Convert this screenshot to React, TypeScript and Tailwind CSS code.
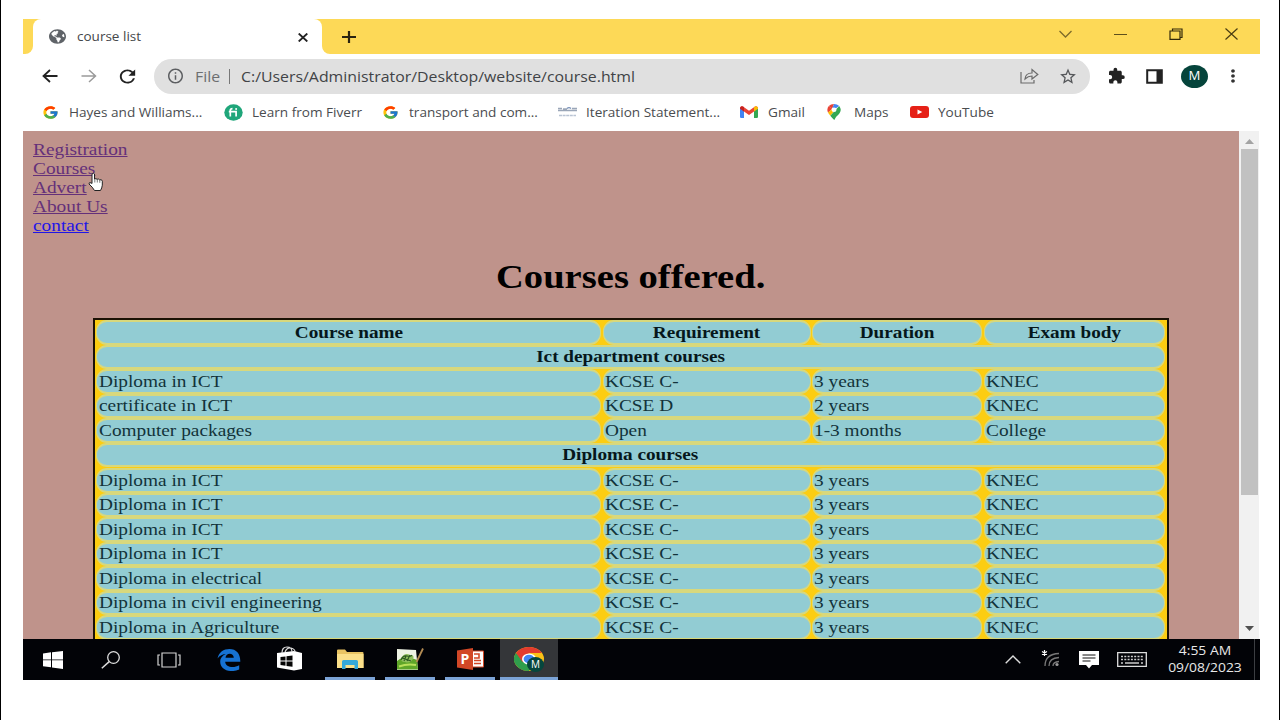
import type { ReactNode } from 'react';
import { FaGlobeAmericas } from 'react-icons/fa';
import { FcGoogle } from 'react-icons/fc';
import { MdExtension, MdInfoOutline, MdMoreVert, MdRefresh, MdStarBorder } from 'react-icons/md';

const LINKS = ['Registration', 'Courses', 'Advert', 'About Us', 'contact'];

// A single string is a section heading that spans every column
const ROWS: (string | string[])[] = [
  'Ict department courses',
  ['Diploma in ICT', 'KCSE C-', '3 years', 'KNEC'],
  ['certificate in ICT', 'KCSE D', '2 years', 'KNEC'],
  ['Computer packages', 'Open', '1-3 months', 'College'],
  'Diploma courses',
  ['Diploma in ICT', 'KCSE C-', '3 years', 'KNEC'],
  ['Diploma in ICT', 'KCSE C-', '3 years', 'KNEC'],
  ['Diploma in ICT', 'KCSE C-', '3 years', 'KNEC'],
  ['Diploma in ICT', 'KCSE C-', '3 years', 'KNEC'],
  ['Diploma in electrical', 'KCSE C-', '3 years', 'KNEC'],
  ['Diploma in civil engineering', 'KCSE C-', '3 years', 'KNEC'],
  ['Diploma in Agriculture', 'KCSE C-', '3 years', 'KNEC'],
];

const CELL = 'h-[24.5px] flex items-center rounded-[11px] border-x border-y-2 border-[#d8d87c] bg-[#92ccd3] whitespace-nowrap';

function FiverrIcon() {
  return (
    <svg width="19" height="17" viewBox="0 0 19 17">
      <ellipse cx="9.5" cy="8.5" rx="9.2" ry="8.2" fill="#1fa67a" />
      <path d="M6.3 12.5V6.6q0-2 2.2-2M4.8 7.6h7.3v4.9" fill="none" stroke="#fff" strokeWidth="1.7" />
      <circle cx="12.1" cy="4.9" r="1" fill="#fff" />
    </svg>
  );
}

function IterationIcon() {
  return (
    <svg width="21" height="12" viewBox="0 0 21 12">
      <path d="M1 2.5h4M6 3h4M15 2.5h5M1 4.5h19" stroke="#9aa6b8" strokeWidth="1.3" />
      <path d="M10 2.5q2-1.8 4 0" fill="none" stroke="#7890b8" strokeWidth="1.3" />
      <path d="M2 9.5h17" stroke="#b9c4d4" strokeWidth="1.6" strokeDasharray="3 .6" />
    </svg>
  );
}

function GmailIcon() {
  return (
    <svg width="18" height="12" viewBox="0 0 18 13" preserveAspectRatio="none">
      <path d="M0 2v9.8q0 1.2 1.2 1.2H4V5z" fill="#4285f4" />
      <path d="M18 2v9.8q0 1.2-1.2 1.2H14V5z" fill="#34a853" />
      <path d="M0 1.8Q.8-.6 3 .5l6 4.6 6-4.6q2.2-1.1 3 1.3L14 6 9 9.7 4 6z" fill="#ea4335" />
      <path d="M14 1.3l1-.8q2.2-1.1 3 1.3v1.3L14 6z" fill="#fbbc04" />
      <path d="M0 1.8Q.8-.6 3 .5l1 .8V6L0 3z" fill="#c5221f" />
    </svg>
  );
}

function MapsIcon() {
  return (
    <svg width="14" height="16" viewBox="0 0 14 16">
      <path d="M7 0a6.8 6 0 0 0-5.2 2.1L5 5z" fill="#ea4335" />
      <path d="M7 0l-2 5 3.5-.6L12.2 2Q10 0 7 0z" fill="#4285f4" />
      <path d="M1.800 2.100Q-.6 5 1 8.600L5.400 5z" fill="#ea4335" />
      <path d="M1 8.600q.8 1.500 2.300 3.200L9 5 5.400 4.800z" fill="#fbbc04" />
      <path d="M12.200 2Q15 5.400 12.700 9C10.500 12 8.600 12.600 7.400 16 6.800 16 5 13.500 3.300 11.800z" fill="#34a853" />
      <ellipse cx="7" cy="5.800" rx="2.500" ry="2.300" fill="#fff" />
    </svg>
  );
}

function YoutubeIcon() {
  return (
    <svg width="19" height="12" viewBox="0 0 19 12">
      <rect width="19" height="12" rx="3" fill="#e62117" />
      <path d="M7.500 3.500v5l4.800-2.500z" fill="#fff" />
    </svg>
  );
}

const google = <FcGoogle className="w-[17px] h-[15px]" preserveAspectRatio="none" />;

const BOOKMARKS: { label: string; icon: ReactNode; slot: string; iconSlot: string }[] = [
  { label: 'Hayes and Williams...', icon: google, slot: 'w-[182px]', iconSlot: 'w-[27px]' },
  { label: 'Learn from Fiverr', icon: <FiverrIcon />, slot: 'w-[158px]', iconSlot: 'w-[28px]' },
  { label: 'transport and com...', icon: google, slot: 'w-[175px]', iconSlot: 'w-[27px]' },
  { label: 'Iteration Statement...', icon: <IterationIcon />, slot: 'w-[183px]', iconSlot: 'w-[29px]' },
  { label: 'Gmail', icon: <GmailIcon />, slot: 'w-[87px]', iconSlot: 'w-[28px]' },
  { label: 'Maps', icon: <MapsIcon />, slot: 'w-[83px]', iconSlot: 'w-[27px]' },
  { label: 'YouTube', icon: <YoutubeIcon />, slot: 'w-[90px]', iconSlot: 'w-[28px]' },
];

function TabStrip() {
  return (
    <div className="h-[35px] flex bg-[#fdd957]">
      <div className="w-[10px] bg-white">
        <div className="h-full bg-[#fdd957] rounded-br-[8px]" />
      </div>
      <div className="w-[289px] h-full bg-white rounded-t-[8px] flex items-center pl-[16px]">
        <FaGlobeAmericas className="w-[17px] h-[15px] text-[#5f6368]" preserveAspectRatio="none" />
        <span className="ml-[11px] -mt-[1px] w-[221px] text-[13px] leading-none text-[#45474a]">
          <span className="inline-block origin-left scale-x-[1.04]">course list</span>
        </span>
        <svg width="10" height="9" viewBox="0 0 10 9" className="mt-px">
          <path d="M.7.500l8.600 8M9.300.500l-8.600 8" stroke="#222" strokeWidth="1.800" />
        </svg>
      </div>
      <div className="flex-1 bg-white">
        <div className="h-full bg-[#fdd957] rounded-bl-[8px] flex items-center pl-[20px] pr-[22px]">
          <svg width="14" height="12" viewBox="0 0 14 12">
            <path d="M7 0v12M0 6h14" stroke="#2a2410" strokeWidth="2.200" />
          </svg>
          <div className="ml-auto -mt-[5px] flex items-center gap-[42px]">
            <svg width="13" height="8" viewBox="0 0 13 8">
              <path d="M.5 1l6 6 6-6" fill="none" stroke="#7d6b2a" strokeWidth="1.300" />
            </svg>
            <svg width="13" height="8" viewBox="0 0 13 8">
              <path d="M0 4.500h13" stroke="#5d4f1c" />
            </svg>
            <svg width="14" height="12" viewBox="0 0 14 12">
              <path d="M1 3h10v8.300H1zM3.500 3V1H13v8.500h-2" fill="none" stroke="#33290a" strokeWidth="1.200" />
            </svg>
            <svg width="13" height="12" viewBox="0 0 13 12">
              <path d="M.5.500l12 11M12.500.500l-12 11" stroke="#4a3d12" strokeWidth="1.200" />
            </svg>
          </div>
        </div>
      </div>
    </div>
  );
}

function Toolbar() {
  return (
    <div className="h-[44px] flex items-center">
      <svg width="16" height="14" viewBox="0 0 16 14" className="ml-[19px]">
        <path d="M15.500 7H1.500M8 1L1.500 7 8 13" fill="none" stroke="#222" strokeWidth="1.800" />
      </svg>
      <svg width="16" height="14" viewBox="0 0 16 14" className="ml-[23px]">
        <path d="M.5 7h14M8 1l6.500 6L8 13" fill="none" stroke="#9a9a9a" strokeWidth="1.500" />
      </svg>
      <MdRefresh className="ml-[19px] w-[23px] h-[21px] text-[#222]" preserveAspectRatio="none" />
      <div className="ml-[15px] w-[936px] h-[35px] rounded-full bg-[#e0e0e0] flex items-center">
        <MdInfoOutline className="ml-[12px] w-[19px] h-[18px] text-[#5c5e61]" />
        <span className="ml-[10px] w-[34px] text-[14px] text-[#6c6e70]">
          <span className="inline-block origin-left scale-x-[1.13]">File</span>
        </span>
        <span className="w-px h-[15px] bg-[#777]" />
        <span className="ml-[11px] text-[14px] text-[#414346] whitespace-nowrap">
          <span className="inline-block origin-left scale-x-[1.133]">C:/Users/Administrator/Desktop/website/course.html</span>
        </span>
        <svg width="19" height="16" viewBox="0 0 19 16" className="ml-auto">
          <path d="M1 4v11h13v-3M5 11q.5-6 7-6V1.500L17.800 6.500 12 11V8Q8 8 5 11z" fill="none" stroke="#6b6b6b" strokeWidth="1.200" />
        </svg>
        <MdStarBorder className="ml-[19px] mr-[12px] w-[20px] h-[19px] text-[#55575a]" />
      </div>
      <MdExtension className="ml-[17px] w-[19px] h-[18px] text-[#222]" />
      <svg width="17" height="15" viewBox="0 0 17 15" className="ml-[20px]">
        <path d="M1.200 1.200h14.600v12.600H1.200z" fill="none" stroke="#222" strokeWidth="2" />
        <path d="M10.500 1h5.500v13h-5.500z" fill="#222" />
      </svg>
      <div className="ml-[18px] w-[27px] h-[23px] rounded-[50%] bg-[#05443b] text-white text-[12px] flex items-center justify-center">
        <span className="inline-block scale-x-[1.1]">M</span>
      </div>
      <MdMoreVert className="ml-[14px] w-[22px] h-[20px] text-[#333]" preserveAspectRatio="none" />
    </div>
  );
}

function BookmarksBar() {
  return (
    <div className="h-[33px] flex items-center pl-[19px] pb-[5px]">
      {BOOKMARKS.map((b) => (
        <div key={b.label} className={`${b.slot} flex items-center`}>
          <div className={`${b.iconSlot} shrink-0`}>{b.icon}</div>
          <span className="text-[13px] leading-none text-[#4a4c4f] whitespace-nowrap inline-block origin-left scale-x-[1.045]">{b.label}</span>
        </div>
      ))}
    </div>
  );
}

function CourseTable() {
  return (
    <div className="ml-[70px] mt-[22px] w-[1076px] border-2 border-[#1c1204] bg-[#fccd12] pl-px pr-[2px] text-[17px] text-[#12333a]">
      <div className="grid grid-cols-[505px_208px_170px_181px] gap-x-[1.5px] text-[#06171b]">
        {['Course name', 'Requirement', 'Duration', 'Exam body'].map((h) => (
          <div key={h} className={`${CELL} justify-center font-bold`}>
            <span className="inline-block scale-x-[1.13]">{h}</span>
          </div>
        ))}
      </div>
      {ROWS.map((row, i) =>
        typeof row === 'string' ? (
          <div key={i} className={`${CELL} justify-center font-bold text-[#06171b] ${i > 0 ? 'mb-px' : ''}`}>
            <span className="inline-block scale-x-[1.13]">{row}</span>
          </div>
        ) : (
          <div key={i} className="grid grid-cols-[505px_208px_170px_181px] gap-x-[1.5px]">
            {row.map((text, j) => (
              <div key={j} className={`${CELL} ${j === 0 ? 'pl-[2px]' : 'pl-[1px]'}`}>
                <span className="inline-block origin-left scale-x-[1.137]">{text}</span>
              </div>
            ))}
          </div>
        )
      )}
    </div>
  );
}

function Page() {
  return (
    <div className="relative h-[508px] flex overflow-hidden font-['Liberation_Serif',serif]">
      <div className="w-[1216px] h-full bg-[#bf938b] overflow-hidden">
        <ul className="pt-[9px] pl-[10px] text-[17px] leading-[19px]">
          {LINKS.map((link) => (
            <li key={link} className="h-[19px]">
              <a className={`inline-block origin-left scale-x-[1.137] underline ${link === 'contact' ? 'text-[#1f16e6]' : 'text-[#64307a]'}`}>{link}</a>
            </li>
          ))}
        </ul>
        <h1 className="mt-[22px] text-center text-[34px] leading-[39px] font-bold text-black">
          <span className="inline-block scale-x-[1.135]">Courses offered.</span>
        </h1>
        <CourseTable />
      </div>
      <div className="w-[20px] h-full bg-[#f1f1f1] flex flex-col items-center">
        <svg width="9" height="5" viewBox="0 0 9 5" className="mt-[8px]">
          <path d="M0 5l4.500-5L9 5z" fill="#a3a3a3" />
        </svg>
        <div className="mt-[5px] w-[17px] h-[346px] bg-[#c1c1c1]" />
        <svg width="9" height="5" viewBox="0 0 9 5" className="mt-auto mb-[8px]">
          <path d="M0 0l4.500 5L9 0z" fill="#505050" />
        </svg>
      </div>
      {/* hand pointer over the Courses link */}
      <svg width="18" height="20" viewBox="0 0 18 20" className="absolute left-[64px] top-[41px]">
        <path
          d="M5 2q1.500-1.500 2.500 0v5q1.500-1 2.500.3 1.500-.8 2.500.5 2.500-.8 2.800 1.400v4Q15 16 13.500 18.500H7.500Q5.500 15 2 12q-.3-2 2-1.200L5 11.500z"
          fill="#fff" stroke="#222" strokeWidth="1"
        />
        <path d="M7.800 7v3.500M10.300 7.500v3M12.800 8v2.800" stroke="#555" strokeWidth=".8" />
      </svg>
    </div>
  );
}

function TaskSlot({ children, open }: { children: ReactNode; open?: boolean }) {
  return (
    <div className="w-[60px] h-full flex flex-col items-center">
      <div className="flex-1 flex items-center">{children}</div>
      <div className={`w-[50px] h-[3px] ${open ? 'bg-[#7ba3d6]' : ''}`} />
    </div>
  );
}

function Taskbar() {
  return (
    <div className="h-[41px] bg-[#020307] flex items-center text-white">
      <div className="w-[59px] flex justify-center">
        <svg width="20" height="18" viewBox="0 0 20 18">
          <path d="M0 2.500l8-1.200v7.200H0zM9 1.200L20 0v8.500H9zM0 9.300h8v7L0 15.200zM9 9.300h11V18L9 16.500z" fill="#fff" />
        </svg>
      </div>
      <div className="w-[58px] flex justify-center">
        <svg width="20" height="18" viewBox="0 0 20 18">
          <circle cx="12.500" cy="6.500" r="5.800" fill="none" stroke="#ddd" strokeWidth="1.300" />
          <path d="M8.200 10.600L.8 17.300" stroke="#ddd" strokeWidth="1.500" />
        </svg>
      </div>
      <div className="w-[57px] mr-[2px] flex justify-center">
        <svg width="24" height="16" viewBox="0 0 24 16">
          <path d="M5 1h14v14H5zM3 3H1v10h2M21 3h2v10h-2" fill="none" stroke="#d5d5d5" strokeWidth="1.200" />
        </svg>
      </div>
      <TaskSlot>
        <svg width="24" height="22" viewBox="0 0 24 22" className="mt-[3px]">
          <path d="M.5 9.500C2 3 6.500 0 12.500 0 19.500 0 23.500 5 23.300 12.700H8.200c.2 5.600 8.500 6.700 14 3.500v4.300C13 24.500 3 20.500 3.200 12.400 3.300 8 7.500 5.400 9 5 6 5 2.500 6.500.5 9.500zM8.500 8.800h8.300C16.600 3.600 9 3.500 8.500 8.800z" fill="#1672d2" />
        </svg>
      </TaskSlot>
      <TaskSlot>
        <svg width="25" height="25" viewBox="0 0 25 25">
          <path d="M0 7l17-2 8 2v16l-8 1.500L0 21.500z" fill="#fff" />
          <path d="M5 7q0-6 5-6t5 5M8 6q2-5 6-4t4 4" fill="none" stroke="#ddd" strokeWidth="1.200" />
          <path d="M3.500 11l5-.6v4.200h-5zM9.500 10.300l6-.8v5.100h-6zM3.500 15.500h5v4.200l-5-.6zM9.500 15.500h6v5.200l-6-.8z" fill="#050505" />
        </svg>
      </TaskSlot>
      <div className="w-px" />
      <TaskSlot open>
        <svg width="28" height="20" viewBox="0 0 28 20" className="mt-[1px]">
          <path d="M1 1.500Q1 .5 2 .5h7l2 2.500h15.500q1 0 1 1V19H1z" fill="#e9c463" />
          <path d="M1 5h26.500v14H1z" fill="#fbe08a" />
          <path d="M6 20v-7.500q0-1.500 1.500-1.500h13q1.500 0 1.500 1.500V20h-3.500v-4h-9v4z" fill="#36a9d9" />
        </svg>
      </TaskSlot>
      <TaskSlot open>
        <svg width="28" height="23" viewBox="0 0 28 23" className="mt-[3px]">
          <path d="M1 1l19 1 2 20H1z" fill="#eef3e4" />
          <path d="M1 13q3-3 7-3 7-1 13 2l1 9.500H1z" fill="#5fa629" />
          <path d="M5 10q4-6 9-3 5 0 3 4-3 5-8 3-5 0-4-4z" fill="#8fbf5c" />
          <path d="M5 12q2-5 6-4t5-1M8 13l2-5M11 13l3-6M6 10l9 3" stroke="#2a5720" fill="none" strokeWidth="1.100" />
          <path d="M3 18.500q8-3 17-1.500" stroke="#b9e05a" strokeWidth="2" fill="none" />
          <path d="M27 .5L20.500 14" stroke="#b38b53" strokeWidth="1.800" />
        </svg>
      </TaskSlot>
      <TaskSlot open>
        <div className="relative mt-[2px]">
          <svg width="27" height="22" viewBox="0 0 27 22">
            <path d="M14 3h12.500v16H14z" fill="#fff" stroke="#d24726" />
            <path d="M17 6h5v4h-5M17 12.500h7M17 15.500h7" fill="none" stroke="#d24726" strokeWidth="1.600" />
            <path d="M0 2.500L16 0v22L0 19.500z" fill="#d24726" />
          </svg>
          <span className="absolute left-[4px] top-[3px] text-[14px] leading-[16px] font-bold">P</span>
        </div>
      </TaskSlot>
      <div className="w-[58px] h-full bg-[#343639] border-b-[3px] border-[#7ba3d6] flex items-center justify-center">
        <div className="relative mt-[2px]">
          <svg width="30" height="24" viewBox="0 0 24 24" preserveAspectRatio="none">
            <circle cx="12" cy="12" r="12" fill="#fbc116" />
            <path d="M12 12L1.600 6A12 12 0 0 0 12 24l5-9z" fill="#2f9e4c" />
            <path d="M1.600 6A12 12 0 0 1 22.400 6H12L6.800 15z" fill="#e33b2e" />
            <circle cx="12" cy="12" r="5.600" fill="#fff" />
            <circle cx="12" cy="12" r="4.300" fill="#4285f4" />
          </svg>
          <div className="absolute left-[13px] top-[10px] w-[17px] h-[15px] rounded-[50%] bg-[#06463d] text-[10px] flex items-center justify-center">M</div>
        </div>
      </div>
      <div className="ml-auto flex items-center">
        <svg width="16" height="9" viewBox="0 0 16 9">
          <path d="M.7 8.300L8 1l7.300 7.300" fill="none" stroke="#ddd" strokeWidth="1.400" />
        </svg>
        <svg width="19" height="17" viewBox="0 0 19 17" className="ml-[20px] -mt-[2px]">
          <path d="M4 16Q4 4 18 3.500M8 16Q8 8 18 7.500M12 16q0-4 6-4.500" fill="none" stroke="#777" strokeWidth="1.300" />
          <circle cx="16" cy="14.500" r="1.600" fill="#999" />
          <path d="M3.500 0v6M1 1.500l5 3M6 1.500l-5 3" stroke="#fff" strokeWidth="1.200" />
        </svg>
        <svg width="20" height="18" viewBox="0 0 20 18" className="ml-[19px]">
          <path d="M0 0h20v14h-7l-3 3.500L7 14H0z" fill="#fff" />
          <path d="M3.500 4h13M3.500 7h13M3.500 10h8" stroke="#111" />
        </svg>
        <svg width="30" height="15" viewBox="0 0 30 15" className="ml-[18px]">
          <path d="M.7.700h28.600v13.600H.7z" fill="none" stroke="#ddd" strokeWidth="1.300" />
          <path d="M4 4.500h22M4 7.500h22" stroke="#ccc" strokeWidth="1.300" strokeDasharray="2 1.300" />
          <path d="M4 11h2M8 11h14M24 11h2" stroke="#ccc" strokeWidth="1.300" />
        </svg>
        <div className="ml-[16px] -mt-[2px] w-[84px] text-center text-[12.500px] leading-[17px] text-[#e8e8e8] whitespace-nowrap">
          <div className="scale-x-[1.11]">4:55 AM</div>
          <div className="scale-x-[1.11]">09/08/2023</div>
        </div>
        <div className="ml-[7px] mr-[5px] w-px h-[41px] bg-[#3c3e42]" />
      </div>
    </div>
  );
}

export default function App() {
  return (
    <div className="w-[1280px] h-[720px] bg-white border-x border-black pt-[19px] pl-[22px] overflow-hidden font-['Open_Sans',sans-serif]">
      <div className="w-[1237px]">
        <TabStrip />
        <Toolbar />
        <BookmarksBar />
        <Page />
        <Taskbar />
      </div>
    </div>
  );
}
